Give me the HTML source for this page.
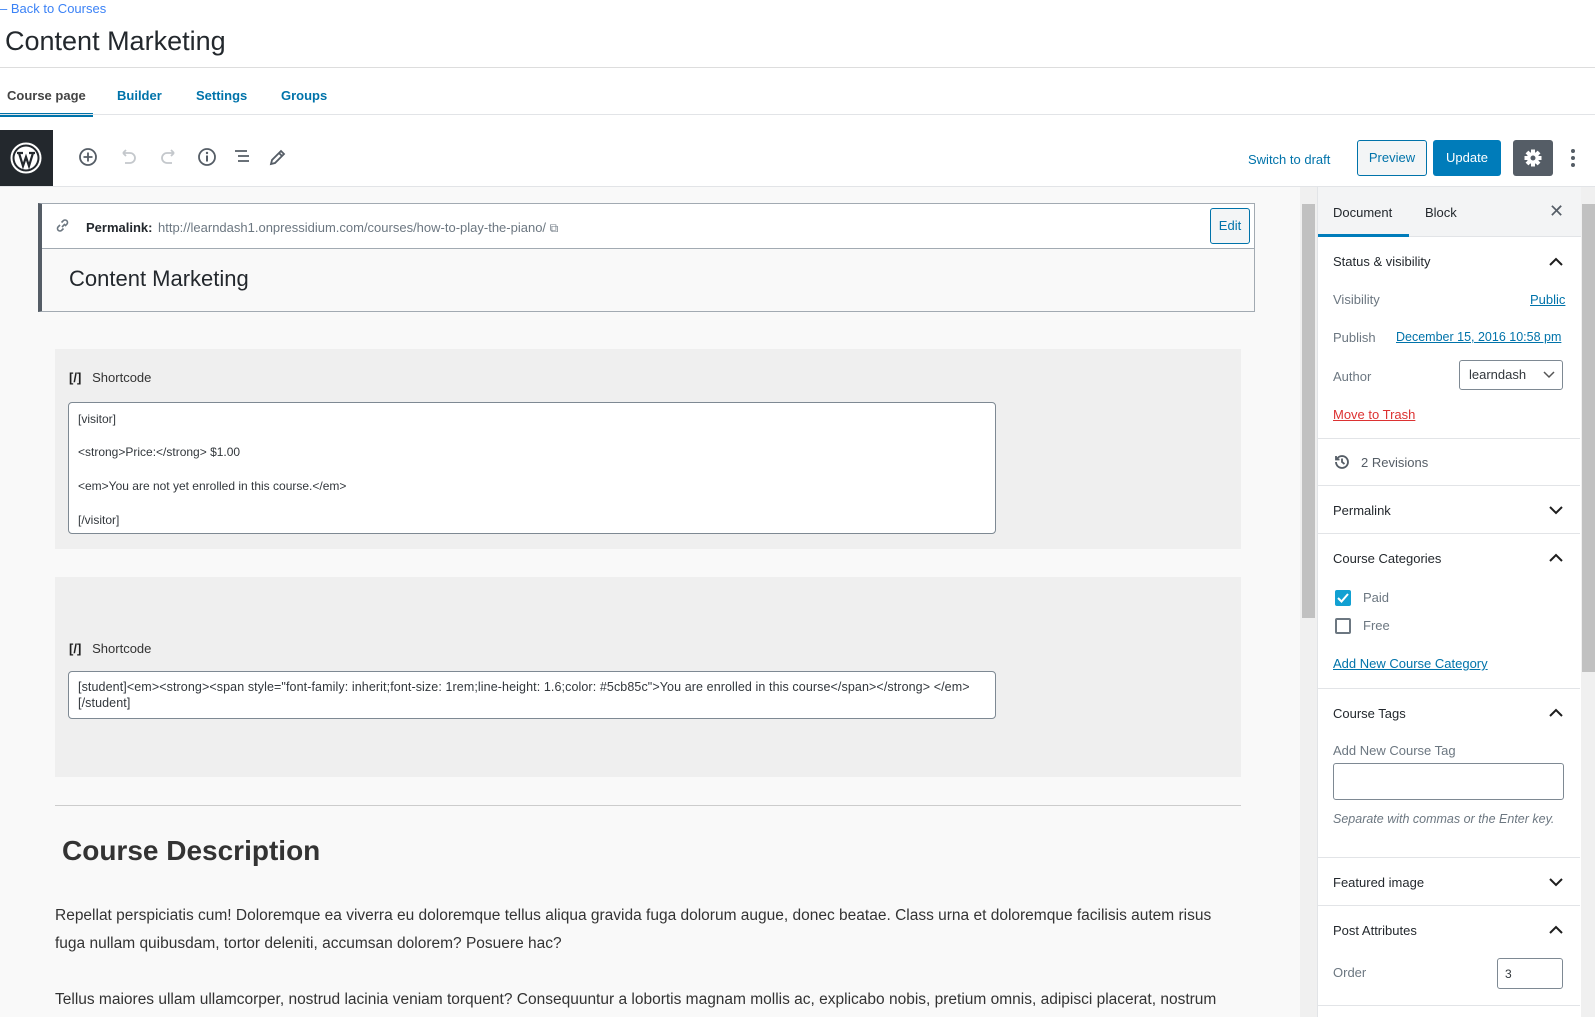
<!DOCTYPE html>
<html><head><meta charset="utf-8">
<style>
*{box-sizing:border-box;margin:0;padding:0}
body{width:1595px;height:1017px;overflow:hidden;background:#fff;font-family:"Liberation Sans",sans-serif;color:#1e1e1e;position:relative}
.a{position:absolute;white-space:nowrap}
a{color:#0073aa;text-decoration:underline}
.lbl{font-size:13px;color:#6c7781}
.h{font-size:13px;color:#23282d}
.div{position:absolute;left:1317px;width:263px;height:1px;background:#e2e4e7}
.chev{position:absolute;width:16px;height:10px}
</style></head><body>
<div class="a" style="left:0;top:1px;font-size:13px;color:#3b82f6">– Back to Courses</div>
<div class="a" style="left:5px;top:26px;font-size:27px;color:#23282d">Content Marketing</div>
<div class="a" style="left:0;top:67px;width:1595px;height:1px;background:#ddd"></div>
<div class="a" style="left:7px;top:88px;font-size:13px;font-weight:bold;color:#444">Course page</div>
<div class="a" style="left:117px;top:88px;font-size:13px;font-weight:bold;color:#0073aa">Builder</div>
<div class="a" style="left:196px;top:88px;font-size:13px;font-weight:bold;color:#0073aa">Settings</div>
<div class="a" style="left:281px;top:88px;font-size:13px;font-weight:bold;color:#0073aa">Groups</div>
<div class="a" style="left:0;top:113px;width:93px;height:4px;background:#0073aa"></div>
<div class="a" style="left:0;top:114px;width:1595px;height:1px;background:#e2e4e7"></div>
<div class="a" style="left:0;top:130px;width:53px;height:56px;background:#23282d"></div>
<svg class="a" style="left:10px;top:142px" width="32" height="32" viewBox="0 0 32 32"><circle cx="16" cy="16" r="14.5" fill="none" stroke="#fff" stroke-width="2"/><circle cx="16" cy="16" r="11.5" fill="#fff"/><path d="M7 11h6M9 11l4 13 3-9 3 9 4-13M19 11h6" stroke="#23282d" stroke-width="2.2" fill="none"/></svg>
<svg class="a" style="left:78px;top:147px" width="20" height="20"><circle cx="10" cy="10" r="8" fill="none" stroke="#555d66" stroke-width="1.8"/><path d="M10 5.5v9M5.5 10h9" stroke="#555d66" stroke-width="1.8"/></svg>
<svg class="a" style="left:118px;top:148px" width="20" height="18"><path d="M5 5h7a5 5 0 010 10H7M5 5l3-3M5 5l3 3" fill="none" stroke="#c4c8cc" stroke-width="1.8"/></svg>
<svg class="a" style="left:159px;top:148px" width="20" height="18"><path d="M15 5H8a5 5 0 000 10h5M15 5l-3-3M15 5l-3 3" fill="none" stroke="#c4c8cc" stroke-width="1.8"/></svg>
<svg class="a" style="left:197px;top:147px" width="20" height="20"><circle cx="10" cy="10" r="8" fill="none" stroke="#555d66" stroke-width="1.8"/><path d="M10 8.5v6" stroke="#555d66" stroke-width="2"/><circle cx="10" cy="6" r="1.2" fill="#555d66"/></svg>
<svg class="a" style="left:234px;top:149px" width="18" height="16"><path d="M1 2h12M4 7h11M4 12h11" stroke="#555d66" stroke-width="1.8"/></svg>
<svg class="a" style="left:269px;top:148px" width="18" height="18"><path d="M2 16l1-4L12 3l3 3-9 9z M10 5l3 3" fill="none" stroke="#555d66" stroke-width="1.8"/></svg>
<div class="a" style="left:1248px;top:152px;font-size:13px;color:#0073aa">Switch to draft</div>
<div class="a" style="left:1357px;top:140px;width:70px;height:36px;border:1px solid #0073aa;border-radius:3px;background:#f3f5f6;font-size:13px;color:#0073aa;text-align:center;line-height:34px">Preview</div>
<div class="a" style="left:1433px;top:140px;width:68px;height:36px;border-radius:3px;background:#007cba;font-size:13px;color:#fff;text-align:center;line-height:36px">Update</div>
<div class="a" style="left:1513px;top:140px;width:40px;height:36px;border-radius:3px;background:#555d66"></div>
<svg class="a" style="left:1523px;top:148px" width="20" height="20" viewBox="0 0 20 20"><g fill="#fff"><circle cx="10" cy="10" r="6"/><rect x="8" y="1.5" width="4" height="17"/><rect x="1.5" y="8" width="17" height="4"/><rect x="8" y="1.5" width="4" height="17" transform="rotate(45 10 10)"/><rect x="8" y="1.5" width="4" height="17" transform="rotate(-45 10 10)"/></g><circle cx="10" cy="10" r="2.5" fill="#555d66"/></svg>
<div class="a" style="left:1571px;top:149px;width:4px;height:4px;border-radius:2px;background:#555d66;box-shadow:0 7px #555d66,0 14px #555d66"></div>
<div class="a" style="left:0;top:186px;width:1595px;height:1px;background:#e2e4e7"></div>
<div class="a" style="left:0;top:187px;width:1300px;height:830px;background:#f9f9f9"></div>
<div class="a" style="left:38px;top:203px;width:1217px;height:109px;border:1px solid #a2aab2;border-left:4px solid #555d66;background:#f9f9f9"></div>
<div class="a" style="left:42px;top:204px;width:1212px;height:44px;background:#fff"></div>
<div class="a" style="left:42px;top:248px;width:1212px;height:1px;background:#a2aab2"></div>
<svg class="a" style="left:54px;top:217px" width="18" height="18"><path d="M8 10l3-3M6 8l-2 2a2.5 2.5 0 003.5 3.5l2-2M11 9l2-2A2.5 2.5 0 009.5 3.5l-2 2" fill="none" stroke="#6c7781" stroke-width="1.6"/></svg>
<div class="a" style="left:86px;top:220px;font-size:13px;font-weight:bold;color:#23282d">Permalink:</div>
<div class="a" style="left:158px;top:220px;font-size:13px;color:#6c7781">http://learndash1.onpressidium.com/courses/how-to-play-the-piano/ <span style="font-size:12px">⧉</span></div>
<div class="a" style="left:1210px;top:208px;width:40px;height:36px;border:1px solid #0073aa;border-radius:3px;background:#f3f5f6;font-size:13px;color:#0073aa;text-align:center;line-height:34px">Edit</div>
<div class="a" style="left:69px;top:266px;font-size:22px;color:#23282d">Content Marketing</div>
<div class="a" style="left:55px;top:349px;width:1186px;height:200px;background:#efefef"></div>
<div class="a" style="left:69px;top:370px;font-size:13px;color:#1e1e1e"><b>[/]</b>&nbsp;&nbsp;&nbsp;<span style="color:#333">Shortcode</span></div>
<div class="a" style="left:68px;top:402px;width:928px;height:132px;background:#fff;border:1px solid #7e8993;border-radius:4px;font-size:12px;color:#32373c;padding:8px 9px;white-space:normal">
<div style="line-height:16px">[visitor]</div><div style="line-height:18px;margin-top:16px">&lt;strong&gt;Price:&lt;/strong&gt; $1.00</div><div style="line-height:18px;margin-top:16px">&lt;em&gt;You are not yet enrolled in this course.&lt;/em&gt;</div><div style="line-height:18px;margin-top:16px">[/visitor]</div></div>
<div class="a" style="left:55px;top:577px;width:1186px;height:200px;background:#efefef"></div>
<div class="a" style="left:69px;top:641px;font-size:13px;color:#1e1e1e"><b>[/]</b>&nbsp;&nbsp;&nbsp;<span style="color:#333">Shortcode</span></div>
<div class="a" style="left:68px;top:671px;width:928px;height:48px;background:#fff;border:1px solid #7e8993;border-radius:4px;font-size:12.5px;letter-spacing:0.1px;color:#32373c;padding:7px 9px;line-height:16px;white-space:normal">[student]&lt;em&gt;&lt;strong&gt;&lt;span style="font-family: inherit;font-size: 1rem;line-height: 1.6;color: #5cb85c"&gt;You are enrolled in this course&lt;/span&gt;&lt;/strong&gt; &lt;/em&gt;[/student]</div>
<div class="a" style="left:55px;top:805px;width:1186px;height:1px;background:#ccc"></div>
<div class="a" style="left:62px;top:835px;font-size:28px;font-weight:bold;color:#333">Course Description</div>
<div class="a" style="left:55px;top:902px;width:1180px;font-size:15.5px;color:#333;line-height:28px;white-space:normal">Repellat perspiciatis cum! Doloremque ea viverra eu doloremque tellus aliqua gravida fuga dolorum augue, donec beatae. Class urna et doloremque facilisis autem risus fuga nullam quibusdam, tortor deleniti, accumsan dolorem? Posuere hac?</div>
<div class="a" style="left:55px;top:986px;font-size:15.5px;color:#333;line-height:28px">Tellus maiores ullam ullamcorper, nostrud lacinia veniam torquent? Consequuntur a lobortis magnam mollis ac, explicabo nobis, pretium omnis, adipisci placerat, nostrum</div>
<div class="a" style="left:1300px;top:187px;width:17px;height:830px;background:#f0f0f0"></div>
<div class="a" style="left:1302px;top:204px;width:13px;height:414px;background:#c1c1c1"></div>
<div class="a" style="left:1317px;top:187px;width:1px;height:830px;background:#e2e4e7"></div>
<div class="a" style="left:1318px;top:187px;width:264px;height:50px;background:#f3f4f5"></div>
<div class="a" style="left:1318px;top:236px;width:264px;height:1px;background:#e2e4e7"></div>
<div class="a" style="left:1318px;top:234px;width:91px;height:3px;background:#007cba"></div>
<div class="a" style="left:1333px;top:205px;font-size:13px;color:#23282d">Document</div>
<div class="a" style="left:1425px;top:205px;font-size:13px;color:#23282d">Block</div>
<div class="a" style="left:1549px;top:201px;font-size:18px;color:#555d66">✕</div>
<div class="a h" style="left:1333px;top:254px">Status &amp; visibility</div>
<div class="a lbl" style="left:1333px;top:292px">Visibility</div>
<div class="a" style="left:1530px;top:292px;font-size:13px"><a>Public</a></div>
<div class="a lbl" style="left:1333px;top:330px">Publish</div>
<div class="a" style="left:1396px;top:330px;font-size:12.5px"><a>December 15, 2016 10:58 pm</a></div>
<div class="a lbl" style="left:1333px;top:369px">Author</div>
<div class="a" style="left:1459px;top:360px;width:104px;height:30px;border:1px solid #7e8993;border-radius:3px;font-size:13px;color:#32373c;padding:6px 9px">learndash</div>
<svg class="a" style="left:1543px;top:371px" width="12" height="8"><path d="M1 1l5 5 5-5" stroke="#555" stroke-width="1.5" fill="none"/></svg>
<div class="a" style="left:1333px;top:407px;font-size:13px"><a style="color:#dc3232">Move to Trash</a></div>
<div class="div" style="top:438px"></div>
<svg class="a" style="left:1333px;top:453px" width="18" height="18"><path d="M3 9a6 6 0 106-6 6 6 0 00-5 3M3 3v3.5h3.5M9 5.5V9l2.5 2" fill="none" stroke="#555d66" stroke-width="1.8"/></svg>
<div class="a lbl" style="left:1361px;top:455px;color:#555d66">2 Revisions</div>
<div class="div" style="top:485px"></div>
<div class="a h" style="left:1333px;top:503px">Permalink</div>
<div class="div" style="top:533px"></div>
<div class="a h" style="left:1333px;top:551px">Course Categories</div>
<div class="a" style="left:1335px;top:590px;width:16px;height:16px;background:#11a0d2;border-radius:2px"></div>
<svg class="a" style="left:1336px;top:592px" width="14" height="12"><path d="M2 6l3.5 3.5L12 2" stroke="#fff" stroke-width="2" fill="none"/></svg>
<div class="a lbl" style="left:1363px;top:590px">Paid</div>
<div class="a" style="left:1335px;top:618px;width:16px;height:16px;border:2px solid #6c7781;border-radius:2px"></div>
<div class="a lbl" style="left:1363px;top:618px">Free</div>
<div class="a" style="left:1333px;top:656px;font-size:13px"><a>Add New Course Category</a></div>
<div class="div" style="top:688px"></div>
<div class="a h" style="left:1333px;top:706px">Course Tags</div>
<div class="a lbl" style="left:1333px;top:743px">Add New Course Tag</div>
<div class="a" style="left:1333px;top:763px;width:231px;height:37px;border:1px solid #7e8993;border-radius:3px"></div>
<div class="a lbl" style="left:1333px;top:812px;font-style:italic;font-size:12.5px">Separate with commas or the Enter key.</div>
<div class="div" style="top:857px"></div>
<div class="a h" style="left:1333px;top:875px">Featured image</div>
<div class="div" style="top:905px"></div>
<div class="a h" style="left:1333px;top:923px">Post Attributes</div>
<div class="a lbl" style="left:1333px;top:965px">Order</div>
<div class="a" style="left:1497px;top:958px;width:66px;height:31px;border:1px solid #7e8993;border-radius:3px;font-size:12px;color:#32373c;padding:8px 7px">3</div>
<div class="div" style="top:1005px"></div>
<svg class="chev" style="left:1548px;top:257px"><path d="M2 8l6-6 6 6" stroke="#1e1e1e" stroke-width="2" fill="none"/></svg>
<svg class="chev" style="left:1548px;top:505px"><path d="M2 2l6 6 6-6" stroke="#1e1e1e" stroke-width="2" fill="none"/></svg>
<svg class="chev" style="left:1548px;top:553px"><path d="M2 8l6-6 6 6" stroke="#1e1e1e" stroke-width="2" fill="none"/></svg>
<svg class="chev" style="left:1548px;top:708px"><path d="M2 8l6-6 6 6" stroke="#1e1e1e" stroke-width="2" fill="none"/></svg>
<svg class="chev" style="left:1548px;top:877px"><path d="M2 2l6 6 6-6" stroke="#1e1e1e" stroke-width="2" fill="none"/></svg>
<svg class="chev" style="left:1548px;top:925px"><path d="M2 8l6-6 6 6" stroke="#1e1e1e" stroke-width="2" fill="none"/></svg>
<div class="a" style="left:1581px;top:187px;width:14px;height:830px;background:#f0f0f0"></div>
<div class="a" style="left:1582px;top:204px;width:13px;height:468px;background:#c1c1c1"></div>
</body></html>
